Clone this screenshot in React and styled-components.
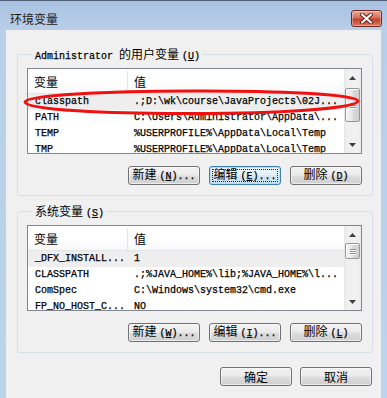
import React from "react";
import styled, { createGlobalStyle, css } from "styled-components";

const GlobalStyle = createGlobalStyle`
  html, body {
    margin: 0;
    padding: 0;
  }
  body {
    background: #bcd3ec;
    font-family: "Liberation Mono", "Noto Sans CJK SC", monospace;
    font-size: 10px;
    color: #000;
    -webkit-text-stroke: 0.25px #000;
  }
`;

const Frame = styled.div`
  width: 387px;
  height: 398px;
  box-sizing: border-box;
  overflow: hidden;
  border-top: 1px solid #4f5f75;
  background: linear-gradient(#a8c2e1, #b9cfe9 29px, #bcd3ec);
  display: flex;
  flex-direction: column;
`;
const TitleBar = styled.div`
  height: 29px;
  flex: none;
  display: flex;
  align-items: flex-start;
  justify-content: space-between;
  padding: 0 5px 0 10px;
`;
const Title = styled.div`
  font-family: "Noto Sans CJK SC", sans-serif;
  font-size: 12px;
  line-height: 16px;
  margin-top: 10px;
  color: #1a1a1a;
  -webkit-text-stroke: 0;
`;
const CloseButton = styled.div`
  margin-top: 9px;
  width: 31px;
  height: 17px;
  box-sizing: border-box;
  border: 1px solid #6b2a22;
  border-radius: 3px;
  background: linear-gradient(#e9a99b, #d66f5c 45%, #c3402c 55%, #d77a63);
  box-shadow: inset 0 0 0 1px rgba(255, 255, 255, 0.35);
  display: flex;
  align-items: center;
  justify-content: center;
`;
const Client = styled.div`
  flex: 1;
  margin: 0 6px;
  background: #f0f0f0;
  padding: 0 8px 0 11px;
  display: flex;
  flex-direction: column;
`;
const Cjk = styled.span`
  font-family: "Noto Sans CJK SC", sans-serif;
  font-size: 12px;
  -webkit-text-stroke: 0;
`;
const Mnemonic = styled.span`
  margin-left: 3px;
`;
const Group = styled.fieldset`
  margin: ${(p) => p.$top}px 0 0 0;
  padding: 7px 10px 10px 9px;
  border: 1px solid #d5dfe5;
  border-radius: 3px;
  min-width: 0;
`;
const Legend = styled.legend`
  margin-left: 5px;
  padding: 0 3px;
  height: 14px;
  line-height: 14px;
  white-space: nowrap;
`;
const ListWrap = styled.div`
  position: relative;
`;
const List = styled.div`
  height: 86px;
  box-sizing: border-box;
  border: 1px solid #828790;
  background: #fff;
  display: flex;
  overflow: hidden;
`;
const ListBody = styled.div`
  flex: 1;
  min-width: 0;
  overflow: hidden;
`;
const Header = styled.div`
  display: flex;
  height: 25px;
  box-sizing: border-box;
  padding-top: 2px;
  background: linear-gradient(#ffffff, #ffffff 55%, #f6f7f9);
  border-bottom: 1px solid #e5e5e5;
`;
const HeadCell = styled.div`
  box-sizing: border-box;
  width: ${(p) => (p.$w ? `${p.$w}px` : "auto")};
  flex: ${(p) => (p.$w ? "none" : 1)};
  padding-left: 6px;
  display: flex;
  align-items: center;
  line-height: 14px;
  border-right: ${(p) => (p.$w ? "1px solid #e5e5e5" : "none")};
`;
const Row = styled.div`
  display: flex;
  height: 16px;
  line-height: 16px;
  background: ${(p) => (p.$selected ? "#eeeeee" : "transparent")};
`;
const Cell = styled.div`
  box-sizing: border-box;
  width: ${(p) => (p.$w ? `${p.$w}px` : "auto")};
  flex: ${(p) => (p.$w ? "none" : 1)};
  padding-left: ${(p) => (p.$w ? 7 : 6)}px;
  white-space: nowrap;
  overflow: hidden;
`;
const Scrollbar = styled.div`
  width: 17px;
  flex: none;
  display: flex;
  flex-direction: column;
  background: linear-gradient(90deg, #e6e6e6, #f0f0f0 3px, #f0f0f0 14px, #eaeaea);
`;
const ArrowBox = styled.div`
  height: 17px;
  flex: none;
  display: flex;
  align-items: center;
  justify-content: center;
`;
const Track = styled.div`
  flex: 1;
  padding-top: ${(p) => p.$offset}px;
`;
const Thumb = styled.div`
  height: ${(p) => p.$h}px;
  margin: 0 1px 0 1px;
  box-sizing: border-box;
  border: 1px solid #979797;
  border-radius: 2px;
  background: linear-gradient(90deg, #f3f3f3, #e9e9e9 45%, #d9d9d9 55%, #cfcfcf);
  box-shadow: inset 1px 1px 0 #fff;
  display: flex;
  flex-direction: column;
  align-items: center;
  justify-content: center;
  gap: 1px;
`;
const Grip = styled.div`
  width: 6px;
  height: 1px;
  background: #8c8c8c;
  box-shadow: 0 1px 0 #fff;
`;
const Annotation = styled.svg`
  position: absolute;
  left: 0;
  top: 0;
  overflow: visible;
  pointer-events: none;
`;
const ButtonRow = styled.div`
  display: flex;
  justify-content: flex-end;
  gap: ${(p) => p.$gap}px;
  margin-top: ${(p) => p.$top}px;
  padding-right: ${(p) => p.$right || 0}px;
`;
const Button = styled.div`
  position: relative;
  width: 72px;
  height: 19px;
  box-sizing: border-box;
  border: 1px solid #707070;
  border-radius: 3px;
  background: linear-gradient(#f2f2f2, #ebebeb 48%, #dddddd 52%, #cfcfcf);
  box-shadow: inset 0 0 0 1px rgba(255, 255, 255, 0.6);
  display: flex;
  align-items: center;
  justify-content: center;
  line-height: 14px;
  white-space: nowrap;
  ${(p) =>
    p.$focused &&
    css`
      border-color: #3c7fb1;
      background: linear-gradient(#eef7fc, #e2f0f8 48%, #d3e7f3 52%, #c6dfee);
      box-shadow: inset 0 0 0 1px #b8dcf3;
      &::after {
        content: "";
        position: absolute;
        inset: 2px;
        border: 1px dotted #222;
        border-radius: 1px;
      }
    `}
`;

const Arrow = ({ up }) => (
  <svg width="7" height="4" viewBox="0 0 7 4">
    <polygon
      points={up ? "0,4 7,4 3.5,0" : "0,0 7,0 3.5,4"}
      fill="#3e3e3e"
    />
  </svg>
);

const Label = ({ cjk, mnemonic, dots }) => (
  <span>
    <Cjk>{cjk}</Cjk>
    {mnemonic && (
      <Mnemonic>
        (<u>{mnemonic}</u>)
      </Mnemonic>
    )}
    {dots && "..."}
  </span>
);

const USER_VARS = [
  ["classpath", ".;D:\\wk\\course\\JavaProjects\\02J..."],
  ["PATH", "C:\\Users\\Administrator\\AppData\\..."],
  ["TEMP", "%USERPROFILE%\\AppData\\Local\\Temp"],
  ["TMP", "%USERPROFILE%\\AppData\\Local\\Temp"],
];

const SYSTEM_VARS = [
  ["_DFX_INSTALL...", "1"],
  ["CLASSPATH", ".;%JAVA_HOME%\\lib;%JAVA_HOME%\\l..."],
  ["ComSpec", "C:\\Windows\\system32\\cmd.exe"],
  ["FP_NO_HOST_C...", "NO"],
];

function VarList({ rows, selected, thumbTop, thumbHeight }) {
  return (
    <List>
      <ListBody>
        <Header>
          <HeadCell $w={100}>
            <Cjk>变量</Cjk>
          </HeadCell>
          <HeadCell>
            <Cjk>值</Cjk>
          </HeadCell>
        </Header>
        {rows.map(([name, value], i) => (
          <Row key={name} $selected={i === selected}>
            <Cell $w={100}>{name}</Cell>
            <Cell>{value}</Cell>
          </Row>
        ))}
      </ListBody>
      <Scrollbar>
        <ArrowBox>
          <Arrow up />
        </ArrowBox>
        <Track $offset={thumbTop}>
          <Thumb $h={thumbHeight}>
            <Grip />
            <Grip />
            <Grip />
          </Thumb>
        </Track>
        <ArrowBox>
          <Arrow />
        </ArrowBox>
      </Scrollbar>
    </List>
  );
}

export default function App() {
  return (
    <>
      <GlobalStyle />
      <Frame>
        <TitleBar>
          <Title>环境变量</Title>
          <CloseButton>
            <svg width="13" height="11" viewBox="0 0 13 11">
              <path
                d="M2 1.5 L11 9.5 M11 1.5 L2 9.5"
                stroke="#5a1c14"
                strokeWidth="4"
                strokeLinecap="round"
              />
              <path
                d="M2 1.5 L11 9.5 M11 1.5 L2 9.5"
                stroke="#ffffff"
                strokeWidth="2.2"
                strokeLinecap="round"
              />
            </svg>
          </CloseButton>
        </TitleBar>
        <Client>
          <Group $top={17}>
            <Legend>
              Administrator <Cjk>的用户变量</Cjk>
              <Mnemonic>
                (<u>U</u>)
              </Mnemonic>
            </Legend>
            <ListWrap>
              <VarList
                rows={USER_VARS}
                selected={0}
                thumbTop={2}
                thumbHeight={34}
              />
              <Annotation width="335" height="86">
                <path
                  d="M -2 34 C -2 20, 331 19, 331 33 C 331 49, -2 50, -2 34 Z"
                  fill="none"
                  stroke="#f01010"
                  strokeWidth="3"
                />
              </Annotation>
            </ListWrap>
            <ButtonRow $gap={9} $top={12}>
              <Button>
                <Label cjk="新建" mnemonic="N" dots />
              </Button>
              <Button $focused>
                <Label cjk="编辑" mnemonic="E" dots />
              </Button>
              <Button>
                <Label cjk="删除" mnemonic="D" />
              </Button>
            </ButtonRow>
          </Group>

          <Group $top={8}>
            <Legend>
              <Cjk>系统变量</Cjk>
              <Mnemonic>
                (<u>S</u>)
              </Mnemonic>
            </Legend>
            <VarList
              rows={SYSTEM_VARS}
              selected={0}
              thumbTop={0}
              thumbHeight={16}
            />
            <ButtonRow $gap={9} $top={12}>
              <Button>
                <Label cjk="新建" mnemonic="W" dots />
              </Button>
              <Button>
                <Label cjk="编辑" mnemonic="I" dots />
              </Button>
              <Button>
                <Label cjk="删除" mnemonic="L" />
              </Button>
            </ButtonRow>
          </Group>

          <ButtonRow $gap={8} $top={14} $right={1}>
            <Button>
              <Cjk>确定</Cjk>
            </Button>
            <Button>
              <Cjk>取消</Cjk>
            </Button>
          </ButtonRow>
        </Client>
      </Frame>
    </>
  );
}
